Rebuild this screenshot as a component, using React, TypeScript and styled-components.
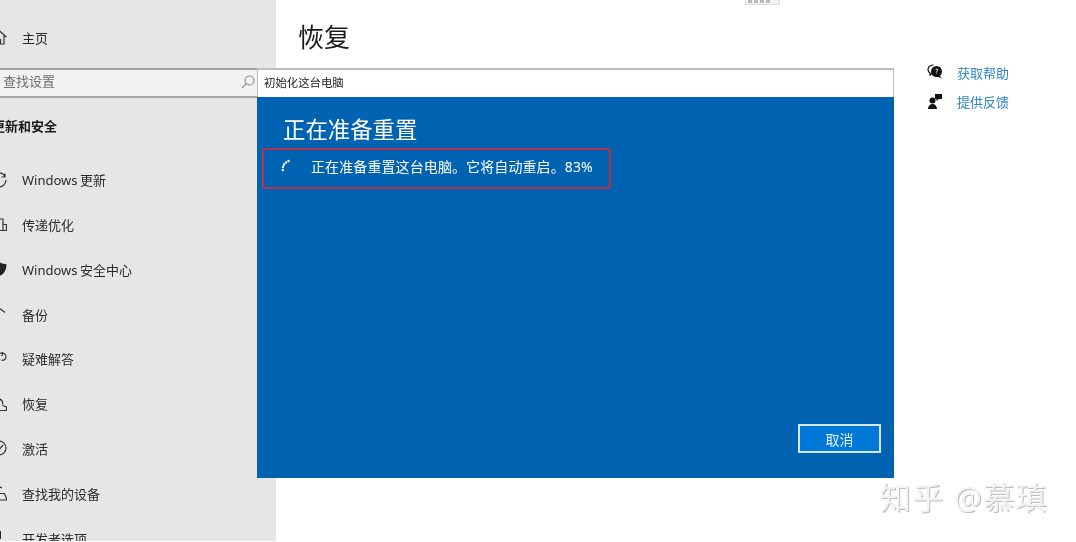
import React from 'react'
import styled, { createGlobalStyle } from 'styled-components'

const FONT = `"Noto Sans", "Noto Sans CJK SC", sans-serif`

const GlobalStyle = createGlobalStyle`
  html, body {
    margin: 0;
    padding: 0;
    background: #fff;
  }
  body {
    font-family: ${FONT};
    overflow: hidden;
  }
`

const Page = styled.div`
  position: relative;
  display: flex;
  width: 1076px;
  height: 542px;
  overflow: hidden;
  background: #fff;
  filter: blur(0.35px);
`

const Sidebar = styled.nav`
  flex: 0 0 276px;
  height: 541px;
  padding-top: 15px;
  box-sizing: border-box;
  overflow: hidden;
  background: #e6e6e6;
  color: #2b2b2b;
  font-size: 13px;
`

const NavRow = styled.div`
  display: flex;
  align-items: center;
  flex: none;
  height: 44.8px;
  gap: 15px;
  white-space: nowrap;
  word-spacing: -1px;
`

const NavIcon = styled.svg`
  flex: none;
  width: 16px;
  height: 16px;
  margin-left: -9px;
  fill: none;
  stroke: #333;
  stroke-width: 1.2;
`

const SearchBox = styled.div`
  display: flex;
  align-items: center;
  justify-content: space-between;
  box-sizing: border-box;
  width: 258px;
  height: 30px;
  margin-top: 8px;
  padding: 0 3px 5px;
  background: #f2f2f2;
  border-top: 2px solid #a3a3a3;
  border-bottom: 2px solid #a3a3a3;
  color: #6d6d6d;
`

const SearchIcon = styled.svg`
  width: 14px;
  height: 14px;
  margin-top: 4px;
  fill: none;
  stroke: #8c8c8c;
  stroke-width: 1.1;
`

const SectionTitle = styled.div`
  height: 35px;
  margin-top: 11px;
  margin-left: -8px;
  line-height: 35px;
  font-weight: 700;
  color: #1a1a1a;
`

const NavList = styled.div`
  display: flex;
  flex-direction: column;
  margin-top: 13.5px;
`

const Main = styled.main`
  flex: 1;
  display: flex;
  justify-content: space-between;
`

const Heading = styled.h1`
  margin: 17px 0 0 22px;
  font-size: 26px;
  line-height: 40px;
  font-weight: 400;
  color: #1a1a1a;
`

const Aside = styled.aside`
  flex: 0 0 149px;
  display: flex;
  flex-direction: column;
  gap: 7px;
  padding-top: 61px;
  box-sizing: border-box;
`

const HelpLink = styled.a`
  display: flex;
  align-items: center;
  gap: 14px;
  height: 22px;
  font-size: 13px;
  color: #2f87c8;
`

const HelpIcon = styled.svg`
  flex: none;
  width: 16px;
  height: 16px;
  fill: #111;
`

const Dialog = styled.section`
  position: absolute;
  left: 257px;
  top: 68px;
  display: flex;
  flex-direction: column;
  width: 637px;
  height: 410px;
`

const TitleBar = styled.header`
  display: flex;
  align-items: center;
  flex: none;
  box-sizing: border-box;
  height: 29px;
  padding: 0 0 3px 6px;
  background: #fff;
  border-top: 2px solid #bdbdbd;
  border-right: 1px solid #bdbdbd;
  border-left: 1px solid #bdbdbd;
  font-size: 11.4px;
  color: #222;
`

const DialogBody = styled.div`
  flex: 1;
  display: flex;
  flex-direction: column;
  background: #0063b1;
  color: #fff;
`

const DialogTitle = styled.h2`
  margin: 17px 0 0 26px;
  font-size: 22.4px;
  line-height: 32px;
  font-weight: 400;
`

const StatusRow = styled.div`
  display: flex;
  align-items: center;
  box-sizing: border-box;
  width: 349px;
  height: 41px;
  margin: 2px 0 0 5px;
  padding: 0 0 5px 17px;
  gap: 18px;
  border: 2px solid #b8324a;
  border-radius: 3px;
  font-size: 14px;
  letter-spacing: 0.1px;
  white-space: nowrap;
`

const Spinner = styled.svg`
  flex: none;
  width: 12px;
  height: 14px;
  margin-top: -3px;
  fill: #fff;
`

const Footer = styled.div`
  margin-top: auto;
  display: flex;
  justify-content: flex-end;
  padding: 0 13px 25px 0;
`

const CancelButton = styled.button`
  width: 83px;
  height: 29px;
  padding: 0;
  background: #0078d7;
  border: 2px solid #d4e8f8;
  color: #e6f2fc;
  font-family: ${FONT};
  font-size: 14px;
`

const TopFragment = styled.div`
  position: absolute;
  left: 745px;
  top: 0;
  display: flex;
  gap: 2px;
  box-sizing: border-box;
  width: 35px;
  height: 5px;
  padding-left: 2px;
  border: 1px solid #ddd;
  border-top: 0;
  background: #f2f2f2;
`

const TopDot = styled.span`
  width: 4px;
  height: 3px;
  background: #bbb;
`

const Watermark = styled.div`
  position: absolute;
  left: 880px;
  top: 475px;
  font-size: 31px;
  line-height: 44px;
  letter-spacing: 1.3px;
  white-space: nowrap;
  color: #f3f3f3;
  text-shadow: 1px 1px 0 #bdbdbd;
`

const icons: Record<string, React.ReactNode> = {
  sync: <path d="M14 4.500A6.500 6.500 0 0 0 3 3.500M15 8a7 7 0 0 1-2.500 5.200 7 7 0 0 1-9 0M14 1.500v3.500h-3.500" />,
  delivery: <path d="M1 14.500h15.500M15.500 14.500v-6h-3.500M12 14.500V8M12 14.500V3H3v11.500" />,
  shield: <path fill="#222" stroke="none" d="M8 1c2.500 1.500 5 2.200 7.500 2.200 0 6-2.500 10-7.500 12C3 13.200.5 9.200.5 3.200 3 3.200 5.500 2.500 8 1Z" />,
  backup: <path d="M8 2l6 4.500M8 2v6" />,
  wrench: <path d="M2 11c4-.5 6-1 7-3M9 2.500c3-1.500 6 .5 6 3 0 2.500-2 4-4.500 3.800M11 1.500c1 1 1 2-.5 3.500" />,
  recovery: <path d="M1 14.500h14.500v-3.500l-4-1.500M4 9.500a4.200 4.200 0 1 1 7.500-1M4 9.500v1" />,
  activate: <path d="M8 1a7 7 0 1 1 0 14 7 7 0 0 1 0-14ZM6 9l1 2 5-6" />,
  find: <path d="M8 1.500l3 1.500M1 15h15l-2.500-6.500H9M8 5.500v3" />,
  dev: <path fill="#222" stroke="none" d="M7 1h3v8H7zM1 11h15v1.500H1zM1 14h15v2H1z" />,
  home: <path d="M.5 8 8 1.500 15.500 8M3 6.500V15h10V6.500M6.500 15v-4.500h3V15" />,
}

const navItems = [
  { label: 'Windows 更新', icon: 'sync' },
  { label: '传递优化', icon: 'delivery' },
  { label: 'Windows 安全中心', icon: 'shield' },
  { label: '备份', icon: 'backup' },
  { label: '疑难解答', icon: 'wrench' },
  { label: '恢复', icon: 'recovery' },
  { label: '激活', icon: 'activate' },
  { label: '查找我的设备', icon: 'find' },
  { label: '开发者选项', icon: 'dev' },
]

const NavItem = ({ label, icon }: { label: string; icon: string }) => (
  <NavRow>
    <NavIcon viewBox="0 0 16 16">{icons[icon]}</NavIcon>
    <span>{label}</span>
  </NavRow>
)

const App = () => (
  <Page>
    <GlobalStyle />
    <Sidebar>
      <NavItem label="主页" icon="home" />
      <SearchBox>
        <span>查找设置</span>
        <SearchIcon viewBox="0 0 14 14">
          <circle cx="8.500" cy="5.500" r="4.500" />
          <path d="M5.300 8.700 1 13" />
        </SearchIcon>
      </SearchBox>
      <SectionTitle>更新和安全</SectionTitle>
      <NavList>
        {navItems.map(item => (
          <NavItem key={item.label} {...item} />
        ))}
      </NavList>
    </Sidebar>
    <Main>
      <Heading>恢复</Heading>
      <Aside>
        <HelpLink>
          <HelpIcon viewBox="0 0 16 16">
            <path fill="none" stroke="#111" strokeWidth="1.200" d="M6.500 1C3.500 1 1 3 1 5.500c0 1.500.8 2.700 2 3.500v2l2-1.500" />
            <circle cx="9.500" cy="7.500" r="5.500" />
            <path d="M12 11l3 3.500-5-2z" />
            <path fill="#fff" d="M8.500 5.800c.2-1.200 2.300-1.300 2.600 0 .2 1-1 1.200-1 2.200h-.8c0-1.200 1-1.400 1-2.100-.1-.6-.9-.5-1 0zM9.300 8.600h.9v.9h-.9z" />
          </HelpIcon>
          <span>获取帮助</span>
        </HelpLink>
        <HelpLink>
          <HelpIcon viewBox="0 0 16 16">
            <circle cx="5.500" cy="7.500" r="3" />
            <path d="M1 16c0-3 2-5 4.500-5S10 13 10 16zM8 1h7v5h-3l-2.500 2V6H8z" />
          </HelpIcon>
          <span>提供反馈</span>
        </HelpLink>
      </Aside>
    </Main>
    <Dialog>
      <TitleBar>初始化这台电脑</TitleBar>
      <DialogBody>
        <DialogTitle>正在准备重置</DialogTitle>
        <StatusRow>
          <Spinner viewBox="0 0 12 14">
            <circle cx="1.800" cy="12" r="1.200" />
            <circle cx="2" cy="9" r="1.200" />
            <circle cx="3" cy="6.500" r="1.200" />
            <circle cx="5" cy="4.500" r="1.200" />
            <circle cx="7.500" cy="3" r="1.200" />
          </Spinner>
          <span>正在准备重置这台电脑。它将自动重启。83%</span>
        </StatusRow>
        <Footer>
          <CancelButton>取消</CancelButton>
        </Footer>
      </DialogBody>
    </Dialog>
    <TopFragment>
      <TopDot />
      <TopDot />
      <TopDot />
      <TopDot />
    </TopFragment>
    <Watermark>知乎 @慕瑱</Watermark>
  </Page>
)

export default App
